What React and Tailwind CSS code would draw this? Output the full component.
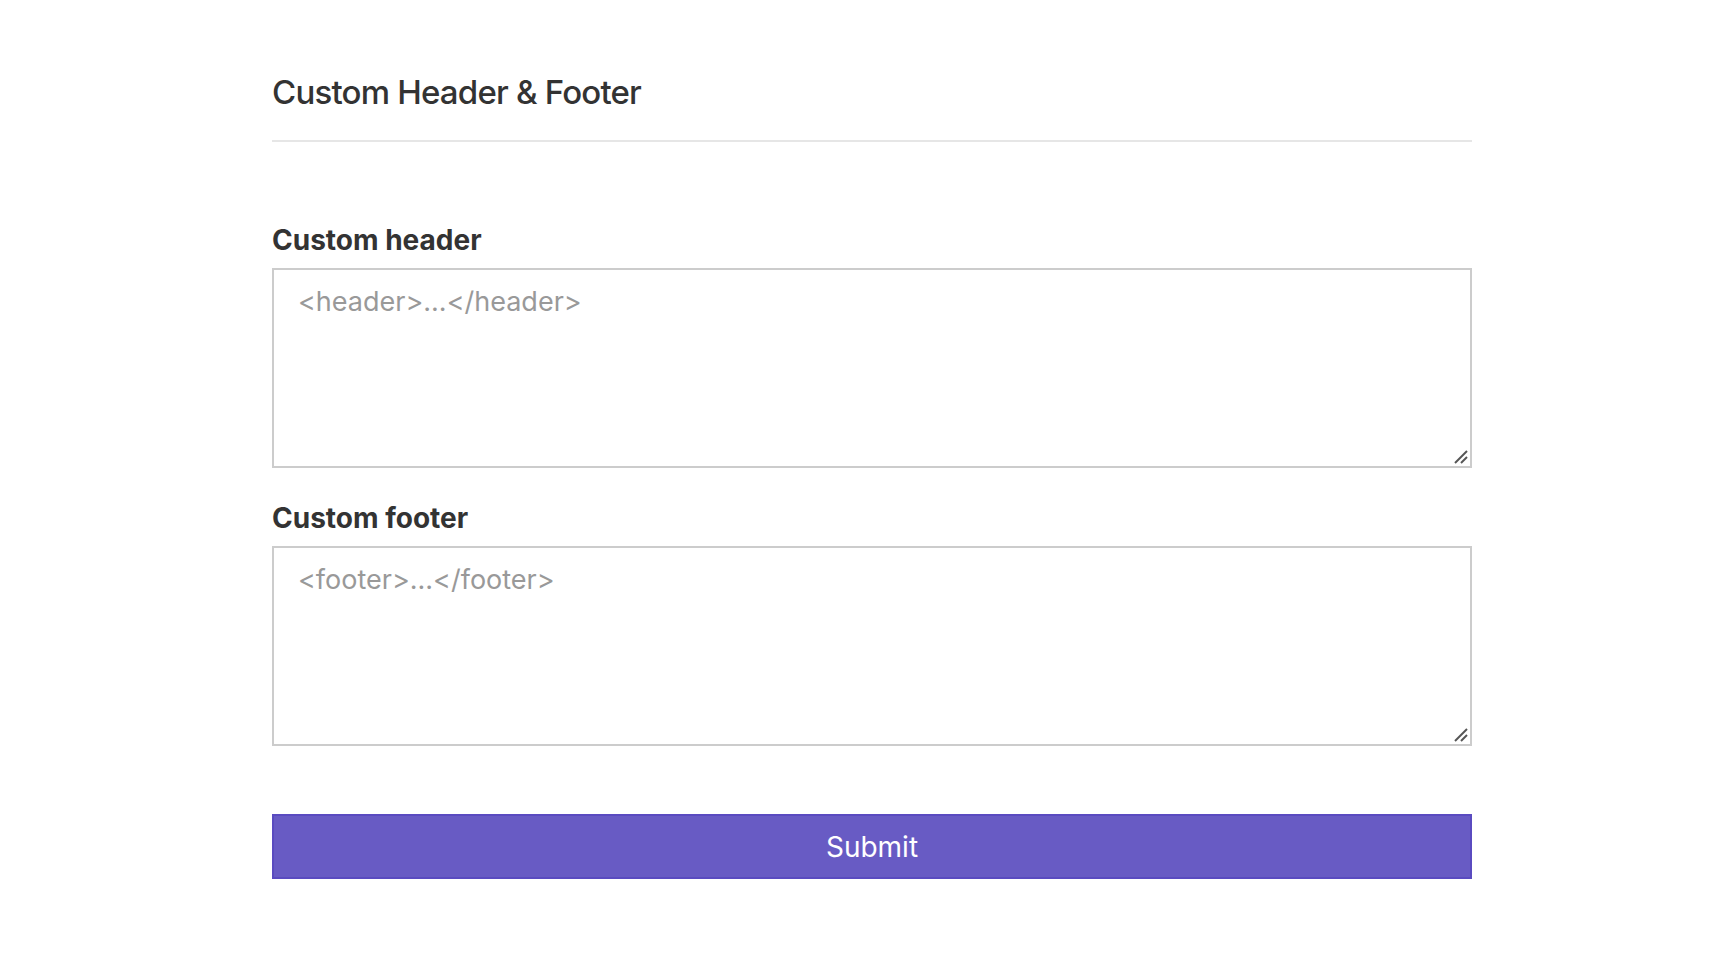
function Field({ label, placeholder, className = "" }) {
  return (
    <div className={"flex flex-col " + className}>
      <label className="text-[28px] leading-[34px] font-bold mb-[11px]">
        {label}
      </label>
      <div className="relative">
        <textarea
          className="block h-[200px] w-full resize-none border-2 border-[#cccccc] bg-white px-[24px] pt-[16px] text-[27px] leading-[31px] text-[#333] placeholder:text-[#999] outline-none"
          placeholder={placeholder}
        ></textarea>
        {/* resize grip */}
        <svg
          className="pointer-events-none absolute bottom-[4px] right-[4px]"
          width="14"
          height="14"
          viewBox="0 0 14 14"
        >
          <path d="M1 13 L13 1" stroke="#555" strokeWidth="2" />
          <path d="M7 13 L13 7" stroke="#555" strokeWidth="2" />
        </svg>
      </div>
    </div>
  );
}

export default function App() {
  return (
    <div className="min-h-screen bg-white font-['Inter',sans-serif] text-[#333]">
      <div className="ml-[272px] w-[1200px] pt-[72px]">
        <h1 className="text-[33px] leading-[40px] font-medium tracking-[-0.8px]">
          Custom Header &amp; Footer
        </h1>
        <div className="mt-[28px] h-[2px] bg-[#e6e6e6]"></div>

        <form className="flex flex-col pt-[81px]" onSubmit={(e) => e.preventDefault()}>
          <Field label="Custom header" placeholder="<header>...</header>" />
          <Field
            label="Custom footer"
            placeholder="<footer>...</footer>"
            className="mt-[33px]"
          />

          <button
            type="submit"
            className="mt-[68px] h-[65px] w-full border-2 border-[#5a4bc0] bg-[#685bc4] text-[28px] text-white"
          >
            Submit
          </button>
        </form>
      </div>
    </div>
  );
}
